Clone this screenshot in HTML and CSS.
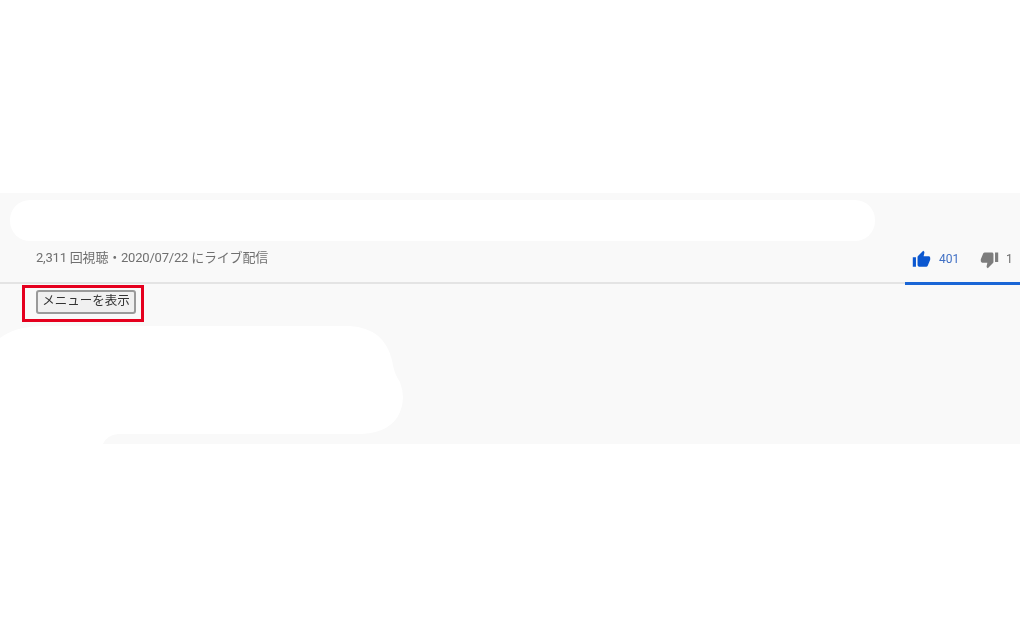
FILE: index.html
```html
<!DOCTYPE html>
<html lang="ja">
<head>
  <meta charset="UTF-8">
  <title>メニューを表示</title>
  <link rel="stylesheet" href="styles.css">
</head>
<body>

<div class="panel">
  <!-- masked video title -->
  <div class="title-mask"></div>

  <div class="info-row">
    <div class="views">2,311 回視聴・2020/07/22 にライブ配信</div>
    <div class="ratings">
      <svg class="thumb" viewBox="0 0 24 24"><path fill="#0b57d0" d="M1 21h4V9H1v12zm22-11c0-1.1-.9-2-2-2h-6.31l.95-4.57.03-.32c0-.41-.17-.79-.44-1.06L14.17 1 7.59 7.59C7.22 7.95 7 8.45 7 9v10c0 1.1.9 2 2 2h9c.83 0 1.54-.5 1.84-1.22l3.02-7.05c.09-.23.14-.47.14-.73v-2z"/></svg>
      <span class="count-up">401</span>
      <svg class="thumb thumb-down" viewBox="0 0 24 24"><path fill="#7d7d7d" d="M15 3H6c-.83 0-1.54.5-1.84 1.22l-3.02 7.05c-.09.23-.14.47-.14.73v2c0 1.1.9 2 2 2h6.31l-.95 4.57-.03.32c0 .41.17.79.44 1.06L9.83 23l6.59-6.59c.36-.36.58-.86.58-1.41V5c0-1.1-.9-2-2-2zm4 0v12h4V3h-4z"/></svg>
      <span class="count-down">1</span>
    </div>
  </div>

  <div class="menu-box">
    <button class="menu-button"><span class="menu-label">メニューを表示</span></button>
  </div>

  <!-- masked comment area -->
  <svg class="comment-mask" viewBox="0 0 404 124" width="404" height="124">
    <path fill="#ffffff" d="M0 16 Q14 5 40 4 L350 4 Q384 6 392 38 Q394 52 400 60 Q406 76 400 90 Q392 110 362 112 L118 112 Q106 113 102 124 L0 124 Z"/>
  </svg>
</div>

</body>
</html>
```

FILE: styles.css
```css
body {
  margin: 0;
  background-color: #ffffff;
  font-family: Roboto, "Noto Sans CJK JP", sans-serif;
}

.panel {
  margin-top: 193px;
  height: 251px;
  padding-top: 7px;
  box-sizing: border-box;
  background-color: #f9f9f9;
  overflow: hidden;
}

.title-mask {
  width: 865px;
  height: 41px;
  margin-left: 10px;
  background-color: #ffffff;
  border-radius: 20px;
}

.info-row {
  display: flex;
  justify-content: space-between;
  height: 43px;
  box-sizing: border-box;
  border-bottom: 2px solid #e4e4e4;
}

.views {
  margin-left: 36px;
  padding-top: 7px;
  font-size: 13px;
  line-height: 19px;
  letter-spacing: -0.2px;
  color: #707070;
  filter: blur(0.3px);
}

.ratings {
  display: flex;
  align-items: flex-start;
  width: 115px;
  height: 44px;
  box-sizing: border-box;
  padding: 9px 0 0 7px;
  border-bottom: 3px solid #1a66d6;
  font-size: 12px;
  line-height: 18px;
}

.thumb {
  width: 19px;
  height: 19px;
  flex: none;
  filter: blur(0.3px);
}

.thumb-down {
  margin-left: 22px;
}

.count-up {
  margin-left: 8px;
  width: 19px;
  color: #3f6fc4;
  filter: blur(0.3px);
}

.count-down {
  margin-left: 7px;
  color: #6f6f6f;
  filter: blur(0.3px);
}

.menu-box {
  width: 122px;
  height: 37px;
  margin: 1px 0 0 22px;
  box-sizing: border-box;
  padding: 2px 0 0 11px;
  border: 3px solid #e5001e;
}

.menu-button {
  display: block;
  width: 100px;
  height: 24px;
  padding: 0 0 4px;
  background-color: #f0f0f0;
  border: 2px solid #9a9a9a;
  border-radius: 3px;
  font-family: "Noto Sans CJK JP", sans-serif;
  font-size: 12.5px;
  line-height: 16px;
  color: #333333;
}

.menu-label {
  display: block;
  filter: blur(0.3px);
}

.comment-mask {
  display: block;
}
```
